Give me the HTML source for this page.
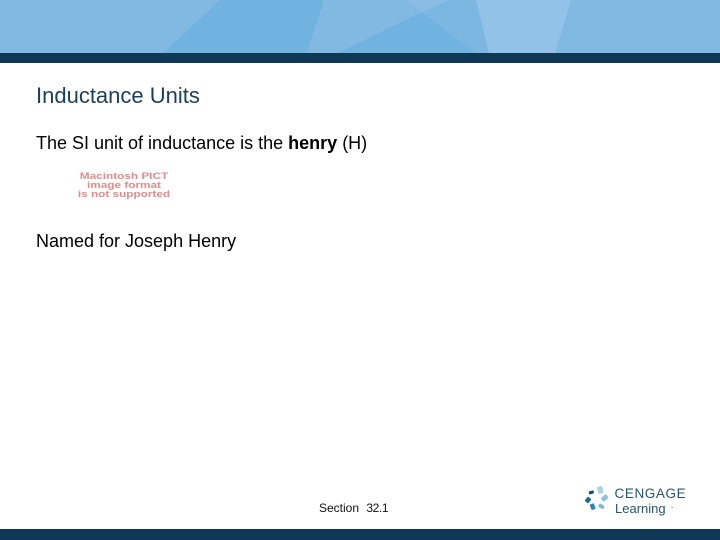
<!DOCTYPE html>
<html>
<head>
<meta charset="utf-8">
<style>
html,body{margin:0;padding:0;background:#fff;}
#p{position:relative;width:720px;height:540px;overflow:hidden;background:#fff;font-family:"Liberation Sans",Arial,sans-serif;}
.t{position:absolute;white-space:nowrap;line-height:1;}
svg{position:absolute;left:0;top:0;}
</style>
</head>
<body>
<div id="p">
<svg width="720" height="540" viewBox="0 0 720 540">
<rect x="0" y="0" width="720" height="53" fill="#82b9e3"/>
<polygon points="163,53 220,0 324,0 307,53" fill="#70b3e1"/>
<polygon points="338,53 422,12 475,53" fill="#70b3e1"/>
<polygon points="422,12 449,0 476,0 490,53 475,53" fill="#7cb7e2"/>
<polygon points="405,0 449,0 422,12" fill="#8abde5"/>
<polygon points="476,0 571,0 555,53 489,53" fill="#93c2e8"/>
<rect x="0" y="53" width="720" height="10" fill="#0f3857"/>
<rect x="0" y="529" width="720" height="11" fill="#0f3857"/>
<g>
<rect x="588.8" y="490.8" width="5" height="3.2" rx="1" fill="#1c4a68" transform="rotate(-15 591.3 492.3)"/>
<rect x="597.6" y="486.4" width="5.4" height="7.2" rx="1.5" fill="#a9d3e6" transform="rotate(-15 600.3 490)"/>
<rect x="601.2" y="495.6" width="7" height="4.8" rx="1.5" fill="#8cc6dc" transform="rotate(-40 604.7 498)"/>
<rect x="585.7" y="497.2" width="4.6" height="5.6" rx="1" fill="#1f6a8e" transform="rotate(40 588 500)"/>
<rect x="590.5" y="503.7" width="4.4" height="6" rx="1" fill="#2a86ad" transform="rotate(-20 592.7 506.7)"/>
<rect x="598.3" y="504.3" width="6" height="4" rx="1.5" fill="#7fbcd6" transform="rotate(30 601.3 506.3)"/>
<rect x="671" y="507" width="2" height="1" fill="#9ab2c2"/>
</g>
</svg>
<div class="t" style="left:36px;top:85px;font-size:22px;color:#1b3f5a;">Inductance Units</div>
<div class="t" style="left:36px;top:134px;font-size:18px;color:#000;">The SI unit of inductance is the <b>henry</b> (H)</div>
<div class="t" style="left:36px;top:232px;font-size:18px;color:#000;">Named for Joseph Henry</div>
<div class="t" style="left:78px;top:171.5px;width:92px;text-align:center;font-size:9.5px;line-height:9.3px;font-weight:bold;color:#e38a8a;transform:scaleX(1.24);transform-origin:center;">Macintosh PICT<br>image format<br>is not supported</div>
<div class="t" style="left:319px;top:502px;font-size:12px;color:#111;word-spacing:4px;">Section <span style="letter-spacing:-0.4px;">32.1</span></div>
<div class="t" style="left:614.5px;top:487px;font-size:13.5px;color:#2a536e;letter-spacing:0.6px;">CENGAGE</div>
<div class="t" style="left:615px;top:502px;font-size:13px;color:#2a536e;">Learning</div>
</div>
</body>
</html>
